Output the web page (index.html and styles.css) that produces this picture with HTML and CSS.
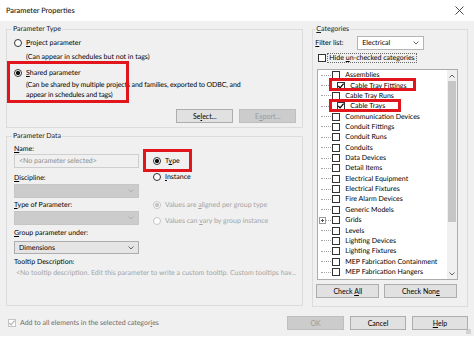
FILE: index.html
```html
<!DOCTYPE html>
<html lang="en">
<head>
  <meta charset="UTF-8" />
  <title>Parameter Properties</title>
  <link rel="stylesheet" href="styles.css">
</head>
<body>
  <div class="dialog">
    <div class="titlebar">
      <span>Parameter Properties</span>
      <svg class="close" width="9" height="9" viewBox="0 0 9 9"><path d="M0.5 0.5 L8.5 8.5 M8.5 0.5 L0.5 8.5"/></svg>
    </div>

    <div class="content">
      <div class="columns">
        <div class="left">
          <!-- parameter type -->
          <fieldset class="group type-group">
            <legend>Parameter Type</legend>
            <div class="radio first"><span class="dot"></span><span><u>P</u>roject parameter</span></div>
            <div class="hint">(Can appear in schedules but not in tags)</div>
            <div class="shared">
              <div class="radio"><span class="dot on"></span><span><u>S</u>hared parameter</span></div>
              <div class="hint two">(Can be shared by multiple projects and families, exported to ODBC, and<br>appear in schedules and tags)</div>
            </div>
            <div class="btn-row">
              <button class="btn">Se<u>l</u>ect...</button>
              <button class="btn" disabled>E<u>x</u>port...</button>
            </div>
          </fieldset>

          <!-- parameter data -->
          <fieldset class="group data-group">
            <legend>Parameter Data</legend>
            <div class="data-grid">
              <div class="fields">
                <div class="field-label l-name"><u>N</u>ame:</div>
                <div class="textbox">&lt;No parameter selected&gt;</div>
                <div class="field-label l-disc"><u>D</u>iscipline:</div>
                <div class="combo off"><span></span><svg width="6" height="4" viewBox="0 0 6 4"><path d="M0.5 0.5 L3 3 L5.5 0.5"/></svg></div>
                <div class="field-label l-type"><u>T</u>ype of Parameter:</div>
                <div class="combo off"><span></span><svg width="6" height="4" viewBox="0 0 6 4"><path d="M0.5 0.5 L3 3 L5.5 0.5"/></svg></div>
                <div class="field-label l-group"><u>G</u>roup parameter under:</div>
                <div class="combo group-combo"><span>Dimensions</span><svg width="6" height="4" viewBox="0 0 6 4"><path d="M0.5 0.5 L3 3 L5.5 0.5"/></svg></div>
              </div>
              <div class="options">
                <div class="radio type-opt"><span class="dot on"></span><span>T<u>y</u>pe</span></div>
                <div class="radio inst-opt"><span class="dot"></span><span><u>I</u>nstance</span></div>
                <div class="radio muted aligned-opt"><span class="dot on"></span><span>Values are <u>a</u>ligned per group type</span></div>
                <div class="radio muted vary-opt"><span class="dot"></span><span>Values can <u>v</u>ary by group instance</span></div>
              </div>
            </div>
            <div class="field-label l-tip">Tooltip Description:</div>
            <div class="tooltip-text">&lt;No tooltip description. Edit this parameter to write a custom tooltip. Custom tooltips hav...</div>
          </fieldset>
        </div>

        <!-- categories -->
        <fieldset class="group cat-group">
          <legend><u>C</u>ategories</legend>
          <div class="filter-row">
            <span class="filter-label"><u>F</u>ilter list:</span>
            <div class="combo white"><span>Electrical</span><svg width="6" height="4" viewBox="0 0 6 4"><path d="M0.5 0.5 L3 3 L5.5 0.5"/></svg></div>
          </div>
          <div class="hide-row">
            <span class="box"></span>
            <span class="focus">Hide <u>u</u>n-checked categories</span>
          </div>
          <div class="listbox">
            <div class="tree">
              <div class="item"><span class="twig"></span><span class="box"></span><span>Assemblies</span></div>
              <div class="item"><span class="twig"></span><span class="hl hl-fit"><span class="box on"><svg width="8" height="8" viewBox="0 0 8 8"><path d="M1.3 4 L3.1 5.9 L6.6 1.6"/></svg></span><span>Cable Tray Fittings</span></span></div>
              <div class="item"><span class="twig"></span><span class="box"></span><span>Cable Tray Runs</span></div>
              <div class="item"><span class="twig"></span><span class="hl hl-trays"><span class="box on"><svg width="8" height="8" viewBox="0 0 8 8"><path d="M1.3 4 L3.1 5.9 L6.6 1.6"/></svg></span><span>Cable Trays</span></span></div>
              <div class="item"><span class="twig"></span><span class="box"></span><span>Communication Devices</span></div>
              <div class="item"><span class="twig"></span><span class="box"></span><span>Conduit Fittings</span></div>
              <div class="item"><span class="twig"></span><span class="box"></span><span>Conduit Runs</span></div>
              <div class="item"><span class="twig"></span><span class="box"></span><span>Conduits</span></div>
              <div class="item"><span class="twig"></span><span class="box"></span><span>Data Devices</span></div>
              <div class="item"><span class="twig"></span><span class="box"></span><span>Detail Items</span></div>
              <div class="item"><span class="twig"></span><span class="box"></span><span>Electrical Equipment</span></div>
              <div class="item"><span class="twig"></span><span class="box"></span><span>Electrical Fixtures</span></div>
              <div class="item"><span class="twig"></span><span class="box"></span><span>Fire Alarm Devices</span></div>
              <div class="item"><span class="twig"></span><span class="box"></span><span>Generic Models</span></div>
              <div class="item"><span class="twig plus"><span class="expander"></span></span><span class="box"></span><span>Grids</span></div>
              <div class="item"><span class="twig"></span><span class="box"></span><span>Levels</span></div>
              <div class="item"><span class="twig"></span><span class="box"></span><span>Lighting Devices</span></div>
              <div class="item"><span class="twig"></span><span class="box"></span><span>Lighting Fixtures</span></div>
              <div class="item"><span class="twig"></span><span class="box"></span><span>MEP Fabrication Containment</span></div>
              <div class="item"><span class="twig"></span><span class="box"></span><span>MEP Fabrication Hangers</span></div>
            </div>
            <div class="scrollbar">
              <div class="arrow"><svg width="6" height="4" viewBox="0 0 6 4"><path d="M0.5 3.5 L3 1 L5.5 3.5"/></svg></div>
              <div class="thumb"></div>
              <div class="track"></div>
              <div class="arrow"><svg width="6" height="4" viewBox="0 0 6 4"><path d="M0.5 0.5 L3 3 L5.5 0.5"/></svg></div>
            </div>
          </div>
          <div class="btn-row cat-buttons">
            <button class="btn check-all">Check <u>A</u>ll</button>
            <button class="btn check-none">Check Non<u>e</u></button>
          </div>
        </fieldset>
      </div>

      <div class="footer">
        <div class="add-all">
          <span class="box on off"><svg width="8" height="8" viewBox="0 0 8 8"><path d="M1.3 4 L3.1 5.9 L6.6 1.6"/></svg></span>
          <span>Add to all elements in the selected categor<u>i</u>es</span>
        </div>
        <div class="actions">
          <button class="btn" disabled>OK</button>
          <button class="btn">Cancel</button>
          <button class="btn"><u>H</u>elp</button>
        </div>
      </div>
    </div>
    <div class="grip"></div>
  </div>
</body>
</html>
```

FILE: styles.css
```css
*, *::before, *::after {
  box-sizing: border-box;
  margin: 0;
  padding: 0;
}
body {
  background: #fff;
  font-family: Lato, "Liberation Sans", sans-serif;
  font-size: 7px;
  color: #000;
  text-rendering: geometricPrecision;
}
u {
  text-underline-offset: 1px;
}
.dialog {
  position: relative;
  width: 474px;
  height: 336px;
  background: #f0f0f0;
  display: flex;
  flex-direction: column;
}
.titlebar {
  height: 21px;
  background: #fff;
  display: flex;
  align-items: center;
  justify-content: space-between;
  padding: 0 10px 0 6px;
  font-size: 7.4px;
}
.close path {
  stroke: #333;
  stroke-width: 0.9;
}
.content {
  flex: 1;
  padding: 4px 6px 0 6px;
  display: flex;
  flex-direction: column;
}
.columns {
  display: flex;
  gap: 9px;
}
.left {
  width: 298px;
  display: flex;
  flex-direction: column;
  gap: 4px;
}

/* group boxes */
.group {
  border: 1px solid #dcdcdc;
  min-width: 0;
  padding: 0 6px 4px 7px;
}
.group legend {
  line-height: 9px;
  padding: 0 1px;
  margin-left: -2px;
  color: #1a1a1a;
}
.type-group {
  height: 103px;
}
.data-group {
  height: 174px;
}
.cat-group {
  width: 156px;
  height: 282px;
  padding: 0 9px 0 4px;
}

/* radios, checkboxes */
.radio {
  display: flex;
  align-items: center;
  gap: 4px;
  height: 10px;
  line-height: 10px;
  white-space: nowrap;
}
.radio.first {
  margin-top: 4px;
}
.dot {
  flex: none;
  width: 8px;
  height: 8px;
  border: 1px solid #333;
  border-radius: 50%;
  background: #fff;
}
.dot.on {
  background: radial-gradient(circle, #111 0 1.8px, #fff 2.4px);
}
.radio.muted {
  color: #a3a3a3;
}
.radio.muted .dot {
  border-color: #c4c4c4;
}
.radio.muted .dot.on {
  background: radial-gradient(circle, #c4c4c4 0 1.8px, #fff 2.4px);
}
.box {
  flex: none;
  width: 8px;
  height: 8px;
  border: 1px solid #333;
  background: #fff;
  display: flex;
  align-items: center;
  justify-content: center;
}
.box svg {
  flex: none;
}
.box path {
  fill: none;
  stroke: #000;
  stroke-width: 1.2;
}
.box.off {
  border-color: #c4c4c4;
}
.box.off path {
  stroke: #b5b5b5;
}

.hint {
  padding-left: 12px;
  line-height: 10px;
  margin-top: 4px;
  white-space: nowrap;
}
.hint.two {
  margin-top: 2px;
  letter-spacing: -0.1px;
}
.shared {
  position: relative;
  margin-top: 6px;
}

/* red call-out frames drawn over the screenshot */
.shared::after,
.type-opt::after,
.hl::after {
  content: "";
  position: absolute;
  border: 3px solid #e2141c;
  pointer-events: none;
}
.shared::after {
  left: -7px;
  top: -7px;
  width: 122px;
  height: 42px;
}
.type-opt {
  position: relative;
}
.type-opt::after {
  left: -10px;
  top: -7px;
  width: 49px;
  height: 23px;
}
.hl {
  position: relative;
  display: flex;
  align-items: center;
  align-self: stretch;
}
.hl::after {
  left: -8px;
  top: -2px;
  height: 13px;
}
.hl-fit::after {
  width: 87px;
}
.hl-trays::after {
  width: 72px;
}

/* buttons */
.btn-row {
  display: flex;
  justify-content: flex-end;
  gap: 6px;
  margin-top: 9px;
}
.btn {
  font: inherit;
  height: 14px;
  width: 56px;
  background: #e1e1e1;
  border: 1px solid #adadad;
  color: #000;
  text-align: center;
}
.btn:disabled {
  background: #cccccc;
  border-color: #bfbfbf;
  color: #9a9a9a;
}
.type-group .btn {
  width: 57px;
}

/* parameter data */
.data-grid {
  display: grid;
  grid-template-columns: 125px 1fr;
}
.field-label {
  line-height: 10px;
  white-space: nowrap;
}
.l-name { margin-top: 3px; }
.l-disc { margin-top: 5px; }
.l-type { margin-top: 2px; }
.l-group { margin-top: 3px; }
.l-tip { margin-top: 3px; }
.textbox {
  height: 14px;
  border: 1px solid #cfcfcf;
  background: #f0f0f0;
  color: #8e8e8e;
  line-height: 12px;
  padding-left: 4px;
}
.combo {
  height: 14px;
  display: flex;
  align-items: center;
  justify-content: space-between;
  padding: 0 4px;
  border: 1px solid #adadad;
  background: #e5e5e5;
  margin-top: 1px;
}
.combo path {
  fill: none;
  stroke: #555;
  stroke-width: 0.9;
}
.combo.off {
  background: #cccccc;
  border-color: #c6c6c6;
}
.combo.off path {
  stroke: #a8a8a8;
}
.group-combo {
  height: 13px;
  margin-top: 3px;
}
.options {
  padding-left: 14px;
}
.type-opt { margin-top: 15px; }
.inst-opt { margin-top: 6px; }
.aligned-opt { margin-top: 18px; }
.vary-opt { margin-top: 6px; }
.tooltip-text {
  margin-top: 1px;
  padding-left: 2px;
  line-height: 10px;
  color: #a5a5a5;
  white-space: nowrap;
}

/* categories */
.filter-row {
  display: flex;
  align-items: center;
  height: 14px;
  margin-top: 2px;
}
.filter-label {
  width: 40px;
  margin-left: -2px;
  margin-right: 2px;
}
.combo.white {
  width: 67px;
  margin-top: 0;
  background: #fff;
  border-color: #b4b4b4;
}
.hide-row {
  display: flex;
  align-items: center;
  height: 10px;
  margin-top: 3px;
  padding-left: 1px;
}
.focus {
  margin-left: 1px;
  padding: 0 1px;
  line-height: 8px;
  border: 1px dotted #6a6a6a;
  white-space: nowrap;
}
.listbox {
  display: flex;
  height: 211px;
  margin-top: 6px;
  border: 1px solid #acacac;
  background: #fff;
  overflow: hidden;
}
.tree {
  flex: 1;
  min-width: 0;
  padding-left: 3px;
}
.item {
  display: flex;
  align-items: center;
  height: 10.37px;
  white-space: nowrap;
}
.item > span:last-child {
  margin-left: 5px;
}
.hl > span:last-child {
  margin-left: 5px;
}
.twig {
  flex: none;
  width: 10px;
  margin-right: 1px;
  border-top: 1px dotted #a5a5a5;
}
.twig.plus {
  position: relative;
}
.expander {
  position: absolute;
  left: -2px;
  top: -4px;
  width: 7px;
  height: 7px;
  border: 1px solid #9a9a9a;
  background: #fff linear-gradient(#555, #555) center / 3px 1px no-repeat;
}
.expander::after {
  content: "";
  position: absolute;
  left: 2px;
  top: 1px;
  width: 1px;
  height: 3px;
  background: #555;
}
.scrollbar {
  flex: none;
  width: 10px;
  display: flex;
  flex-direction: column;
  background: #f0f0f0;
}
.arrow {
  flex: none;
  height: 11px;
  display: flex;
  align-items: center;
  justify-content: center;
}
.arrow path {
  fill: none;
  stroke: #606060;
  stroke-width: 1;
}
.thumb {
  flex: none;
  height: 141px;
  margin: 0 1px;
  background: #c6c6c6;
}
.track {
  flex: 1;
}
.cat-buttons {
  justify-content: flex-start;
  gap: 5px;
  margin-top: 4px;
  margin-left: -1px;
}
.check-all {
  width: 63px;
}
.check-none {
  width: 73px;
}

/* footer */
.footer {
  display: flex;
  align-items: center;
  justify-content: space-between;
  height: 14px;
  margin-top: 9px;
}
.add-all {
  display: flex;
  align-items: center;
  gap: 4px;
  margin-left: 2px;
  color: #6d6d6d;
}
.actions {
  display: flex;
  gap: 6px;
}
.actions .btn:first-child {
  width: 57px;
}
.grip {
  position: absolute;
  right: 3px;
  bottom: 2px;
  width: 5px;
  height: 5px;
  background: radial-gradient(circle, #b0b0b0 0.6px, transparent 0.8px) 0 0 / 2px 2px;
}
```
